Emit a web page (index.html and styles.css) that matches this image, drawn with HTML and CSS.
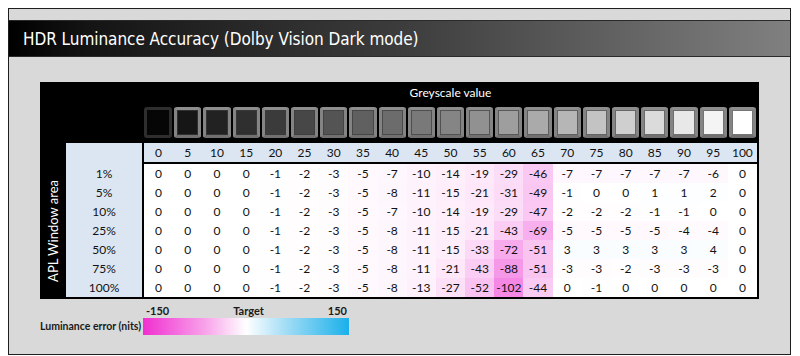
FILE: index.html
```html
<!DOCTYPE html>
<html lang="en">
<head>
<meta charset="utf-8">
<title>HDR Luminance Accuracy</title>
<link rel="stylesheet" href="styles.css">
</head>
<body>
<div class="frame">
  <div class="header"><h1 class="title">HDR Luminance Accuracy (Dolby Vision Dark mode)</h1></div>
  <div class="box">
    <div class="gs-title">Greyscale value</div>
    <div class="swatches">
      <div class="sw first" style="background:#060606"></div>
      <div class="sw" style="background:#161616"></div>
      <div class="sw" style="background:#222222"></div>
      <div class="sw" style="background:#2f2f2f"></div>
      <div class="sw" style="background:#3b3b3b"></div>
      <div class="sw" style="background:#474747"></div>
      <div class="sw" style="background:#545454"></div>
      <div class="sw" style="background:#606060"></div>
      <div class="sw" style="background:#6c6c6c"></div>
      <div class="sw" style="background:#797979"></div>
      <div class="sw" style="background:#858585"></div>
      <div class="sw" style="background:#919191"></div>
      <div class="sw" style="background:#9e9e9e"></div>
      <div class="sw" style="background:#aaaaaa"></div>
      <div class="sw" style="background:#b6b6b6"></div>
      <div class="sw" style="background:#c3c3c3"></div>
      <div class="sw" style="background:#cfcfcf"></div>
      <div class="sw" style="background:#dbdbdb"></div>
      <div class="sw" style="background:#e8e8e8"></div>
      <div class="sw" style="background:#f4f4f4"></div>
      <div class="sw" style="background:#ffffff"></div>
    </div>
    <div class="lower">
      <div class="apl"><span class="apl-text">APL Window area</span></div>
      <div class="labels">
        <div class="lbl">1%</div>
        <div class="lbl">5%</div>
        <div class="lbl">10%</div>
        <div class="lbl">25%</div>
        <div class="lbl">50%</div>
        <div class="lbl">75%</div>
        <div class="lbl">100%</div>
      </div>
      <div class="data">
        <div class="h">0</div><div class="h">5</div><div class="h">10</div><div class="h">15</div><div class="h">20</div><div class="h">25</div><div class="h">30</div><div class="h">35</div><div class="h">40</div><div class="h">45</div><div class="h">50</div><div class="h">55</div><div class="h">60</div><div class="h">65</div><div class="h">70</div><div class="h">75</div><div class="h">80</div><div class="h">85</div><div class="h">90</div><div class="h">95</div><div class="h">100</div>

        <div class="c">0</div><div class="c">0</div><div class="c">0</div><div class="c">0</div><div class="c" style="--v:-1">-1</div><div class="c" style="--v:-2">-2</div><div class="c" style="--v:-3">-3</div><div class="c" style="--v:-5">-5</div><div class="c" style="--v:-7">-7</div><div class="c" style="--v:-10">-10</div><div class="c" style="--v:-14">-14</div><div class="c" style="--v:-19">-19</div><div class="c" style="--v:-29">-29</div><div class="c" style="--v:-46">-46</div><div class="c" style="--v:-7">-7</div><div class="c" style="--v:-7">-7</div><div class="c" style="--v:-7">-7</div><div class="c" style="--v:-7">-7</div><div class="c" style="--v:-7">-7</div><div class="c" style="--v:-6">-6</div><div class="c">0</div>

        <div class="c">0</div><div class="c">0</div><div class="c">0</div><div class="c">0</div><div class="c" style="--v:-1">-1</div><div class="c" style="--v:-2">-2</div><div class="c" style="--v:-3">-3</div><div class="c" style="--v:-5">-5</div><div class="c" style="--v:-8">-8</div><div class="c" style="--v:-11">-11</div><div class="c" style="--v:-15">-15</div><div class="c" style="--v:-21">-21</div><div class="c" style="--v:-31">-31</div><div class="c" style="--v:-49">-49</div><div class="c" style="--v:-1">-1</div><div class="c">0</div><div class="c">0</div><div class="c" style="--v:1">1</div><div class="c" style="--v:1">1</div><div class="c" style="--v:2">2</div><div class="c">0</div>

        <div class="c">0</div><div class="c">0</div><div class="c">0</div><div class="c">0</div><div class="c" style="--v:-1">-1</div><div class="c" style="--v:-2">-2</div><div class="c" style="--v:-3">-3</div><div class="c" style="--v:-5">-5</div><div class="c" style="--v:-7">-7</div><div class="c" style="--v:-10">-10</div><div class="c" style="--v:-14">-14</div><div class="c" style="--v:-19">-19</div><div class="c" style="--v:-29">-29</div><div class="c" style="--v:-47">-47</div><div class="c" style="--v:-2">-2</div><div class="c" style="--v:-2">-2</div><div class="c" style="--v:-2">-2</div><div class="c" style="--v:-1">-1</div><div class="c" style="--v:-1">-1</div><div class="c">0</div><div class="c">0</div>

        <div class="c">0</div><div class="c">0</div><div class="c">0</div><div class="c">0</div><div class="c" style="--v:-1">-1</div><div class="c" style="--v:-2">-2</div><div class="c" style="--v:-3">-3</div><div class="c" style="--v:-5">-5</div><div class="c" style="--v:-8">-8</div><div class="c" style="--v:-11">-11</div><div class="c" style="--v:-15">-15</div><div class="c" style="--v:-21">-21</div><div class="c" style="--v:-43">-43</div><div class="c" style="--v:-69">-69</div><div class="c" style="--v:-5">-5</div><div class="c" style="--v:-5">-5</div><div class="c" style="--v:-5">-5</div><div class="c" style="--v:-5">-5</div><div class="c" style="--v:-4">-4</div><div class="c" style="--v:-4">-4</div><div class="c">0</div>

        <div class="c">0</div><div class="c">0</div><div class="c">0</div><div class="c">0</div><div class="c" style="--v:-1">-1</div><div class="c" style="--v:-2">-2</div><div class="c" style="--v:-3">-3</div><div class="c" style="--v:-5">-5</div><div class="c" style="--v:-8">-8</div><div class="c" style="--v:-11">-11</div><div class="c" style="--v:-15">-15</div><div class="c" style="--v:-33">-33</div><div class="c" style="--v:-72">-72</div><div class="c" style="--v:-51">-51</div><div class="c" style="--v:3">3</div><div class="c" style="--v:3">3</div><div class="c" style="--v:3">3</div><div class="c" style="--v:3">3</div><div class="c" style="--v:3">3</div><div class="c" style="--v:4">4</div><div class="c">0</div>

        <div class="c">0</div><div class="c">0</div><div class="c">0</div><div class="c">0</div><div class="c" style="--v:-1">-1</div><div class="c" style="--v:-2">-2</div><div class="c" style="--v:-3">-3</div><div class="c" style="--v:-5">-5</div><div class="c" style="--v:-8">-8</div><div class="c" style="--v:-11">-11</div><div class="c" style="--v:-21">-21</div><div class="c" style="--v:-43">-43</div><div class="c" style="--v:-88">-88</div><div class="c" style="--v:-51">-51</div><div class="c" style="--v:-3">-3</div><div class="c" style="--v:-3">-3</div><div class="c" style="--v:-2">-2</div><div class="c" style="--v:-3">-3</div><div class="c" style="--v:-3">-3</div><div class="c" style="--v:-3">-3</div><div class="c">0</div>

        <div class="c">0</div><div class="c">0</div><div class="c">0</div><div class="c">0</div><div class="c" style="--v:-1">-1</div><div class="c" style="--v:-2">-2</div><div class="c" style="--v:-3">-3</div><div class="c" style="--v:-5">-5</div><div class="c" style="--v:-8">-8</div><div class="c" style="--v:-13">-13</div><div class="c" style="--v:-27">-27</div><div class="c" style="--v:-52">-52</div><div class="c" style="--v:-102">-102</div><div class="c" style="--v:-44">-44</div><div class="c">0</div><div class="c" style="--v:-1">-1</div><div class="c">0</div><div class="c">0</div><div class="c">0</div><div class="c">0</div><div class="c">0</div>
      </div>
    </div>
  </div>
  <div class="legend">
    <div class="scale-labels"><span>-150</span><span>Target</span><span>150</span></div>
    <div class="legend-name">Luminance error (nits)</div>
    <div class="bar"></div>
  </div>
</div>
</body>
</html>
```
FILE: styles.css
```css
html, body {
  margin: 0;
  padding: 0;
  background: #ffffff;
}
body {
  padding: 8px 9px 0 8px;
}
.frame {
  box-sizing: border-box;
  width: 783px;
  height: 347px;
  border: 1px solid #1e1e1e;
  background: #d9d9d9;
  padding-top: 11px;
}
.header {
  height: 35px;
  border-top: 1px solid #2a2a2a;
  border-bottom: 1px solid #2a2a2a;
  background: linear-gradient(to right, #000000 0%, #141414 10%, #3c3c3c 50%, #808080 100%);
  display: flex;
  align-items: center;
  padding-left: 14px;
}
.title {
  margin: 0;
  font-family: "DejaVu Sans Condensed", "DejaVu Sans", sans-serif;
  font-stretch: semi-condensed;
  font-weight: normal;
  font-size: 17px;
  letter-spacing: -0.05px;
  color: #ffffff;
  white-space: nowrap;
}
.box {
  width: 719px;
  box-sizing: border-box;
  margin: 25px 0 0 31px;
  padding: 0 2px 2px 0;
  background: #000000;
  font-family: Lato, "Liberation Sans", sans-serif;
}
.gs-title {
  margin-left: 104px;
  height: 21px;
  line-height: 22px;
  text-align: center;
  color: #ffffff;
  font-size: 12px;
}
.swatches {
  margin-left: 104px;
  height: 40px;
  box-sizing: border-box;
  padding-top: 4px;
  display: grid;
  grid-template-columns: repeat(21, 1fr);
}
.sw {
  height: 31px;
  margin: 0 1px;
  box-sizing: border-box;
  border: 3px solid #848484;
  border-top-color: #8e8e8e;
  border-bottom-color: #707070;
  border-radius: 3px;
  box-shadow: inset 0 0 0 1px rgba(60, 60, 60, 0.7);
}
.sw.first {
  margin-left: 0;
  border-color: #2e2e2e;
  box-shadow: none;
}
.lower {
  display: flex;
}
.apl {
  width: 26px;
  box-sizing: border-box;
  padding-top: 21px;
  display: flex;
  align-items: center;
  justify-content: center;
}
.apl-text {
  writing-mode: vertical-rl;
  transform: rotate(180deg);
  color: #ffffff;
  font-size: 13px;
  white-space: nowrap;
}
.labels {
  width: 76px;
  box-sizing: border-box;
  padding-top: 21px;
  background: #dce6f2;
}
.lbl {
  height: 19px;
  line-height: 19px;
  text-align: center;
  font-size: 12px;
  color: #111111;
}
.data {
  margin-left: 2px;
  flex: 1;
  display: grid;
  grid-template-columns: repeat(21, 1fr);
  grid-template-rows: 21px repeat(7, 19px);
}
.h {
  box-sizing: border-box;
  border-bottom: 2px solid #000000;
  background: #dce6f2;
  text-align: center;
  line-height: 20px;
  font-size: 12px;
  color: #111111;
}
.c {
  --v: 0;
  --n: max(0, var(--v) / -150);
  --p: max(0, var(--v) / 150);
  background: rgb(calc(255 - 15 * var(--n) - 229 * var(--p)), calc(255 - 175 * var(--n) - 79 * var(--p)), calc(255 - 40 * var(--n) - 20 * var(--p)));
  text-align: center;
  line-height: 19px;
  font-size: 12px;
  color: #111111;
}
.legend {
  margin: 5px 0 0 31px;
  display: grid;
  grid-template-columns: 103px 206px;
  grid-template-rows: 13px 17px;
  row-gap: 1px;
  font-family: Lato, "Liberation Sans", sans-serif;
  font-weight: bold;
  color: #1a1a1a;
}
.scale-labels {
  grid-column: 2;
  grid-row: 1;
  display: flex;
  justify-content: space-between;
  padding: 0 2px 0 3px;
  font-size: 11px;
  line-height: 13px;
}
.legend-name {
  grid-column: 1;
  grid-row: 2;
  text-align: right;
  padding-right: 2px;
  font-size: 10.5px;
  line-height: 17px;
  white-space: nowrap;
}
.bar {
  grid-column: 2;
  grid-row: 2;
  background: linear-gradient(to right, #f02fd0 0%, #f8a2ea 30%, #ffffff 50%, #9fdcf5 70%, #1ab0eb 100%);
}
```
